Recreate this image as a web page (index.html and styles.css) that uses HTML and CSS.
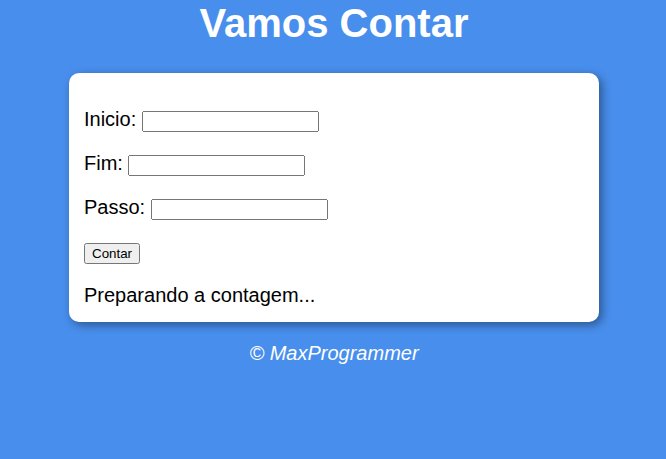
FILE: index.html
```html
<!doctype html>
<html>
	<head>
		<meta http-equiv="Content-Type" content="text/html; charset=utf-8">
		<title>Vamos Contar</title>
		<link rel="stylesheet" href="styles.css">
	</head>
<body>
	<header>
		<h1>Vamos Contar</h1>
	</header>
	<section>
		<div>
			<p>Inicio: <input type="number" id="txti"></p>
			<p>Fim: <input type="number" id="txtf"></p>
			<p>Passo: <input type="number" id="txtp"></p>
			<p><input type="button" value="Contar" onclick="contar()"></p>
		</div>
		<div id="res">
			Preparando a contagem...
		</div>
	</section>
	<footer>
		<p>&copy; MaxProgrammer</p>
	</footer>

<script>
	function contar(){
		var ini = document.getElementById("txti");
		var fim = document.getElementById("txtf");
		var passo = document.getElementById("txtp");
		var res = document.getElementById("res");
		if(ini.value.length==0 || fim.value.length==0 || passo.value.length==0){
			res.innerHTML = "Impossível contar!";
			return;
		}
		var i = Number(ini.value);
		var f = Number(fim.value);
		var p = Number(passo.value);
		if(p<=0){ p = 1; }
		res.innerHTML = "Contando: ";
		if(i<f){
			for(var c=i;c<=f;c+=p){ res.innerHTML += c+" \u{1F449} "; }
		}else{
			for(var c=i;c>=f;c-=p){ res.innerHTML += c+" \u{1F449} "; }
		}
		res.innerHTML += "\u{1F3C1}";
	}
</script>
</body>
</html>
```

FILE: styles.css
```css
body{margin:0;padding-left:2px;background:#488eec;font:normal 20px "Liberation Sans",Arial,sans-serif;}
header{color:#fff;text-align:center;}
header h1{margin:0 0 27px;font-size:40px;line-height:46px;}
section{background:#fff;width:500px;margin:auto;padding:15px;border-radius:10px;
	box-shadow:3px 3px 10px rgba(0,0,0,0.4);}
section p{margin:20px 0;line-height:23px;}
#res{line-height:23px;}
input[type=number]{width:169px;-moz-appearance:textfield;}
input[type=number]::-webkit-inner-spin-button{-webkit-appearance:none;}
footer{color:#fff;text-align:center;font-style:italic;}
footer p{margin:20px 0;line-height:23px;}
```
